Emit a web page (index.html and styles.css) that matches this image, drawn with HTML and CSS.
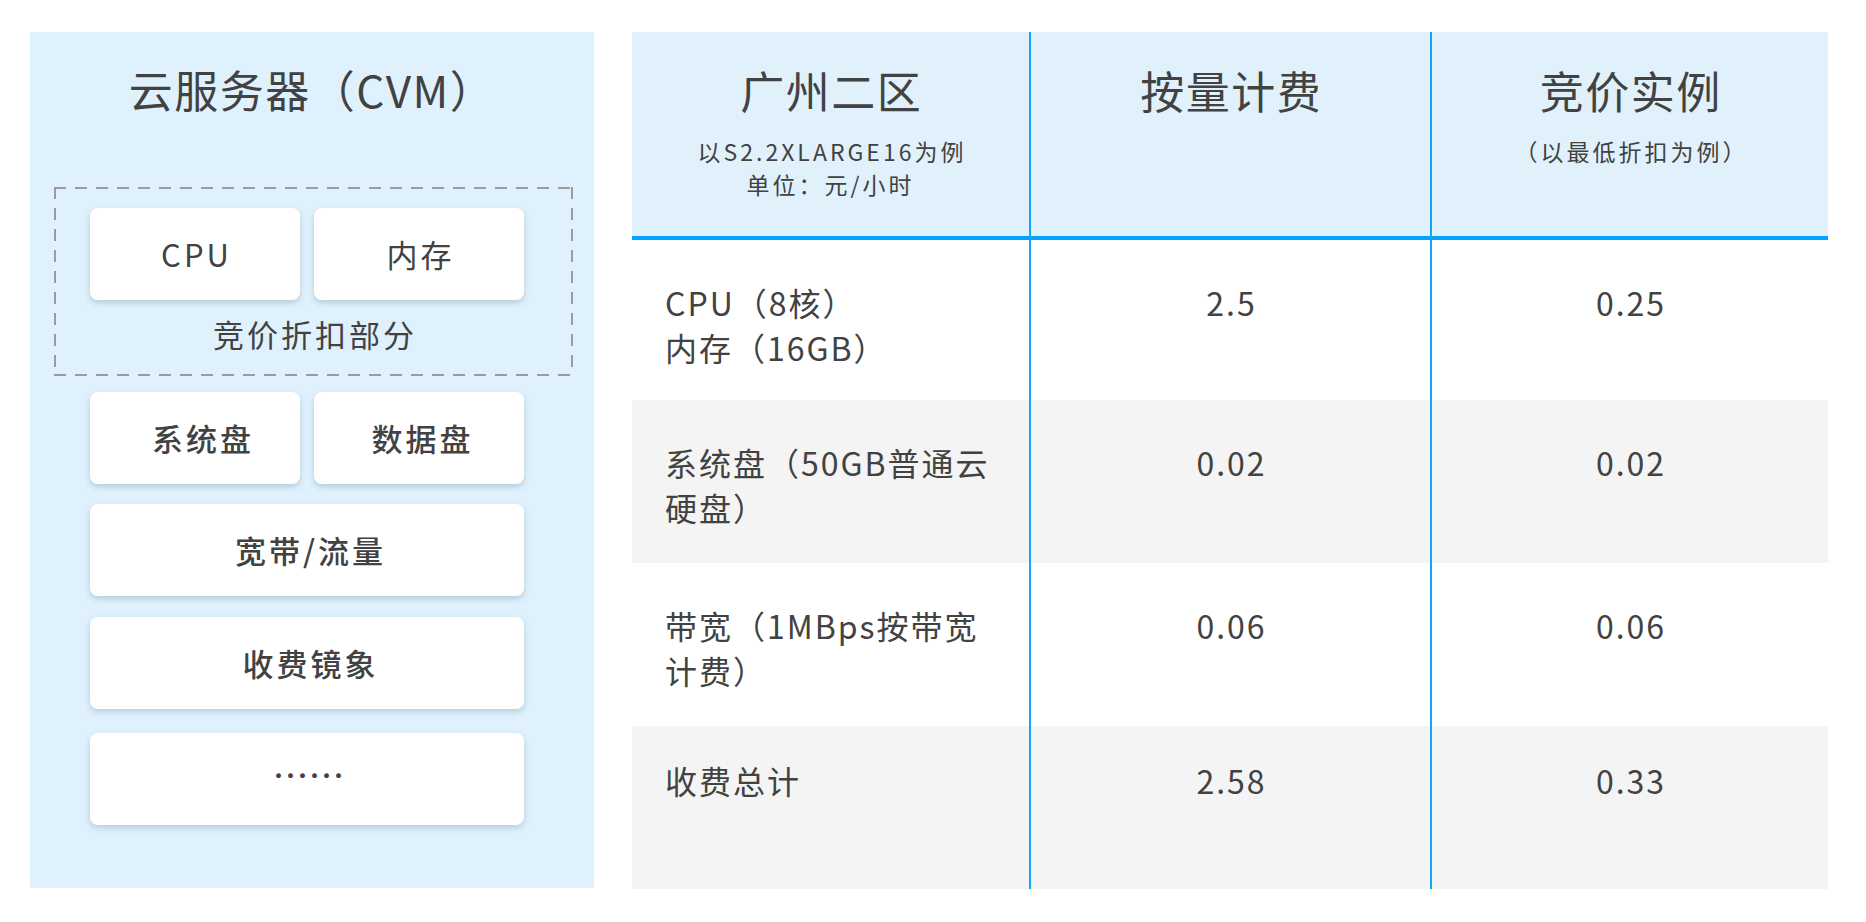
FILE: index.html
```html
<!DOCTYPE html>
<html lang="zh-CN">
<head>
<meta charset="utf-8">
<title>云服务器（CVM）竞价实例</title>
<link rel="stylesheet" href="styles.css">
</head>
<body>
<div class="page">
  <section class="panel">
    <h1 class="panel-title">云服务器（CVM）</h1>
    <div class="dashed">
      <div class="pair pair-in">
        <div class="card">CPU</div>
        <div class="card">内存</div>
      </div>
      <div class="dashed-label">竞价折扣部分</div>
    </div>
    <div class="stack">
      <div class="pair">
        <div class="card heavy shift">系统盘</div>
        <div class="card heavy">数据盘</div>
      </div>
      <div class="card heavy gap-20">宽带/流量</div>
      <div class="card heavy gap-21">收费镜象</div>
      <div class="card gap-24 dots">……</div>
    </div>
  </section>

  <section class="table">
    <div class="th">
      <div class="th-title">广州二区</div>
      <div class="th-sub">以S2.2XLARGE16为例<br>单位：元/小时</div>
    </div>
    <div class="th div">
      <div class="th-title">按量计费</div>
    </div>
    <div class="th div">
      <div class="th-title">竞价实例</div>
      <div class="th-sub">（以最低折扣为例）</div>
    </div>

    <div class="td label r1">CPU（8核）<br>内存（16GB）</div>
    <div class="td num div r1">2.5</div>
    <div class="td num div r1">0.25</div>

    <div class="td label gray">系统盘（50GB普通云<br>硬盘）</div>
    <div class="td num div gray">0.02</div>
    <div class="td num div gray">0.02</div>

    <div class="td label">带宽（1MBps按带宽<br>计费）</div>
    <div class="td num div">0.06</div>
    <div class="td num div">0.06</div>

    <div class="td label gray last">收费总计</div>
    <div class="td num div gray last">2.58</div>
    <div class="td num div gray last">0.33</div>
  </section>
</div>
</body>
</html>
```
FILE: styles.css
```css
html, body {
  margin: 0;
  padding: 0;
  background: #ffffff;
}

body {
  font-family: "Noto Sans CJK SC", "Noto Sans", sans-serif;
  color: #424242;
}

.page {
  display: flex;
  align-items: flex-start;
  gap: 38px;
  padding: 32px 0 0 30px;
}

/* ---------- left panel ---------- */
.panel {
  width: 564px;
  height: 856px;
  background: #dff1fc;
  display: flex;
  flex-direction: column;
}

.panel-title {
  margin: 27px 0 0;
  font-size: 44px;
  font-weight: 400;
  line-height: 60px;
  letter-spacing: 1.5px;
  text-align: center;
}

.dashed {
  margin: 68px 0 0 24px;
  width: 519px;
  box-sizing: border-box;
  padding: 21px 0 22px;
  background:
    repeating-linear-gradient(90deg, #9b9b9b 0 12px, transparent 12px 21px) top left / 100% 2px no-repeat,
    repeating-linear-gradient(90deg, #9b9b9b 0 12px, transparent 12px 21px) bottom left / 100% 2px no-repeat,
    repeating-linear-gradient(180deg, #9b9b9b 0 12px, transparent 12px 21px) top left / 2px 100% no-repeat,
    repeating-linear-gradient(180deg, #9b9b9b 0 12px, transparent 12px 21px) top right / 2px 100% no-repeat;
}

.pair {
  display: grid;
  grid-template-columns: 210px 210px;
  gap: 14px;
}

.pair-in {
  margin-left: 36px;
}

.dashed-label {
  margin-top: 14px;
  font-size: 31px;
  line-height: 40px;
  letter-spacing: 3px;
  text-indent: 3px;
  text-align: center;
}

.stack {
  margin: 16px 0 0 60px;
  width: 434px;
  display: flex;
  flex-direction: column;
}

.card {
  height: 92px;
  background: #ffffff;
  border-radius: 8px;
  box-shadow: 0 3px 6px rgba(40, 80, 110, 0.22);
  display: flex;
  align-items: center;
  justify-content: center;
  font-size: 31px;
  letter-spacing: 3px;
  padding: 0 0 2px 3px;
  box-sizing: border-box;
}

.card.heavy {
  font-weight: 500;
  padding-left: 7px;
}

.card.shift {
  padding-left: 16px;
}

.gap-20 { margin-top: 20px; }
.gap-21 { margin-top: 21px; }
.gap-24 { margin-top: 24px; }

.dots {
  letter-spacing: 0;
  font-size: 36px;
  padding-bottom: 10px;
}

/* ---------- table ---------- */
.table {
  width: 1196px;
  display: grid;
  grid-template-columns: 397px 401px 398px;
}

.th {
  height: 208px;
  box-sizing: border-box;
  background: #e0f1fc;
  border-bottom: 4px solid #00a3ff;
  text-align: center;
  padding-top: 28px;
}

.th-title {
  font-size: 44px;
  line-height: 60px;
  letter-spacing: 1.5px;
  text-indent: 1.5px;
}

.th-sub {
  margin-top: 15px;
  font-size: 23px;
  line-height: 33px;
  letter-spacing: 3px;
  text-indent: 3px;
}

.div {
  border-left: 2px solid #12a6fa;
}

.td {
  height: 163px;
  box-sizing: border-box;
  padding-top: 40px;
  font-size: 32px;
  line-height: 45px;
  letter-spacing: 2px;
  background: #ffffff;
}

.td.r1 {
  height: 160px;
}

.td.gray {
  background: #f4f4f4;
}

.td.last {
  padding-top: 32px;
}

.td.label {
  padding-left: 33px;
  padding-right: 20px;
}

.td.num {
  text-align: center;
  text-indent: 2px;
}
```
